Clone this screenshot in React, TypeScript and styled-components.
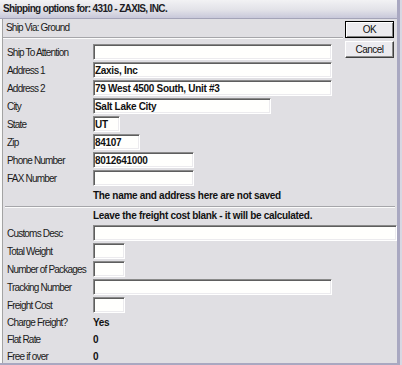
import styled, { createGlobalStyle } from 'styled-components';

const GlobalStyle = createGlobalStyle`
  html, body {
    margin: 0;
    padding: 0;
  }

  body {
    background: #e0dfe3;
    font-family: "Liberation Sans", Arial, sans-serif;
    color: #111;
  }
`;

interface IField {
  label: string;
  value?: string;
  width?: number;
}

const addressFields: IField[] = [
  { label: 'Ship To Attention', width: 239 },
  { label: 'Address 1', value: 'Zaxis, Inc', width: 239 },
  { label: 'Address 2', value: '79 West 4500 South, Unit #3', width: 239 },
  { label: 'City', value: 'Salt Lake City', width: 178 },
  { label: 'State', value: 'UT', width: 27 },
  { label: 'Zip', value: '84107', width: 47 },
  { label: 'Phone Number', value: '8012641000', width: 101 },
  { label: 'FAX Number', width: 101 },
];

const freightFields: IField[] = [
  { label: 'Customs Desc' },
  { label: 'Total Weight', width: 32 },
  { label: 'Number of Packages', width: 32 },
  { label: 'Tracking Number', width: 239 },
  { label: 'Freight Cost', width: 32 },
];

const infoRows = [
  { label: 'Charge Freight?', value: 'Yes' },
  { label: 'Flat Rate', value: '0' },
  { label: 'Free if over', value: '0' },
];

const App = () => {
  return (
    <>
      <GlobalStyle />
      <Window>
        <Inner>
          <TitleBar>Shipping options for: 4310 - ZAXIS, INC.</TitleBar>
          <Body>
            <Top>
              <LeftCol>
                <ShipVia>Ship Via: Ground</ShipVia>
                <Etched />
                <Form>
                  {addressFields.map((f) => (
                    <Row key={f.label}>
                      <Label>{f.label}</Label>
                      <Field $width={f.width} defaultValue={f.value ?? ''} />
                    </Row>
                  ))}
                  <Note>The name and address here are not saved</Note>
                </Form>
              </LeftCol>

              <Buttons>
                <Button $default>OK</Button>
                <Button>Cancel</Button>
              </Buttons>
            </Top>

            <Separator />

            <Bottom>
              <Note $short>Leave the freight cost blank - it will be calculated.</Note>
              {freightFields.map((f) => (
                <Row key={f.label}>
                  <Label>{f.label}</Label>
                  <Field $width={f.width} defaultValue={f.value ?? ''} />
                </Row>
              ))}
              {infoRows.map((r) => (
                <InfoRow key={r.label}>
                  <Label>{r.label}</Label>
                  <Value>{r.value}</Value>
                </InfoRow>
              ))}
            </Bottom>
          </Body>
        </Inner>
      </Window>
    </>
  );
};

export default App;

const Window = styled.div`
  display: flex;
  width: 402px;
  height: 365px;
  box-sizing: border-box;
  border-right: 2px solid #d8d8e3;
  overflow: hidden;
`;

const Inner = styled.div`
  flex: 1;
  display: flex;
  flex-direction: column;
  border-right: 3px solid #a9a8c1;
  min-width: 0;
`;

const TitleBar = styled.div`
  height: 19px;
  box-sizing: border-box;
  padding-left: 3px;
  line-height: 18px;
  font-size: 10px;
  font-weight: 700;
  letter-spacing: -0.65px;
  color: #1c1c24;
  background: linear-gradient(180deg, #f2f2f4 0%, #e2e2e8 55%, #c8c8da 100%);
  border-bottom: 1px solid #a4a4b8;
  white-space: nowrap;
`;

const Body = styled.div`
  flex: 1;
  padding-left: 3px;
  background: #e0dfe3;
  box-shadow: inset 2px 0 0 #fafafa, inset 3px 0 0 #a3a3a3;
  border-bottom: 2px solid #a9a8c1;
  overflow: hidden;
`;

const Top = styled.div`
  display: flex;
  align-items: flex-start;
  gap: 2px;
  padding-right: 3px;
`;

const LeftCol = styled.div`
  width: 340px;
`;

const ShipVia = styled.div`
  height: 18px;
  line-height: 18px;
  padding-left: 3px;
  font-size: 10px;
  letter-spacing: -0.8px;
  color: #1a1a1a;
`;

const Etched = styled.div`
  height: 0;
  border-top: 1px solid #a6a6aa;
  border-bottom: 1px solid #fbfbfb;
`;

const Form = styled.div`
  display: flex;
  flex-direction: column;
  gap: 2px;
  padding-top: 5px;
`;

const Row = styled.div`
  display: flex;
  align-items: center;
  height: 16px;
`;

const InfoRow = styled(Row)`
  height: 15px;
`;

const Label = styled.span`
  flex-shrink: 0;
  width: 90px;
  box-sizing: border-box;
  padding-left: 4px;
  font-size: 10px;
  letter-spacing: -0.8px;
  white-space: nowrap;
  color: #1a1a1a;
`;

const Field = styled.input<{ $width?: number }>`
  box-sizing: border-box;
  height: 16px;
  ${({ $width }) => ($width ? `width: ${$width}px;` : 'flex: 1; min-width: 0;')}
  margin: 0;
  padding: 0 0 0 1px;
  border: 1px solid;
  border-color: #8a8a8a #ffffff #ffffff #8a8a8a;
  box-shadow: inset 1px 1px 0 #5e5e5e, inset -1px -1px 0 #ecebee;
  background: #fffffd;
  font-family: "Liberation Sans", Arial, sans-serif;
  font-size: 10px;
  font-weight: 700;
  letter-spacing: -0.3px;
  color: #111;
  outline: none;
`;

const Note = styled.div<{ $short?: boolean }>`
  height: ${({ $short }) => ($short ? '15px' : '16px')};
  line-height: ${({ $short }) => ($short ? '15px' : '16px')};
  padding-left: 90px;
  font-size: 10px;
  font-weight: 700;
  letter-spacing: -0.3px;
  white-space: nowrap;
`;

const Value = styled.span`
  font-size: 10px;
  font-weight: 700;
  letter-spacing: -0.3px;
`;

const Buttons = styled.div`
  display: flex;
  flex-direction: column;
  gap: 3px;
  padding-top: 2px;
`;

const Button = styled.button<{ $default?: boolean }>`
  width: 49px;
  height: 17px;
  margin: 0;
  padding: 0;
  box-sizing: border-box;
  background: #ecebef;
  border: 1px solid;
  border-color: ${({ $default }) => ($default ? '#000' : '#fff #404040 #404040 #fff')};
  box-shadow: ${({ $default }) =>
    $default
      ? 'inset 1px 1px 0 #fff, inset -1px -1px 0 #808080'
      : 'inset -1px -1px 0 #8c8c8c'};
  font-family: "Liberation Sans", Arial, sans-serif;
  font-size: 10px;
  letter-spacing: -0.5px;
  color: #111;
  line-height: 14px;
`;

const Separator = styled.div`
  height: 0;
  margin: 2px 2px 0;
  border-top: 1px solid #a6a6aa;
  border-bottom: 1px solid #fbfbfb;
`;

const Bottom = styled.div`
  display: flex;
  flex-direction: column;
  gap: 2px;
`;
